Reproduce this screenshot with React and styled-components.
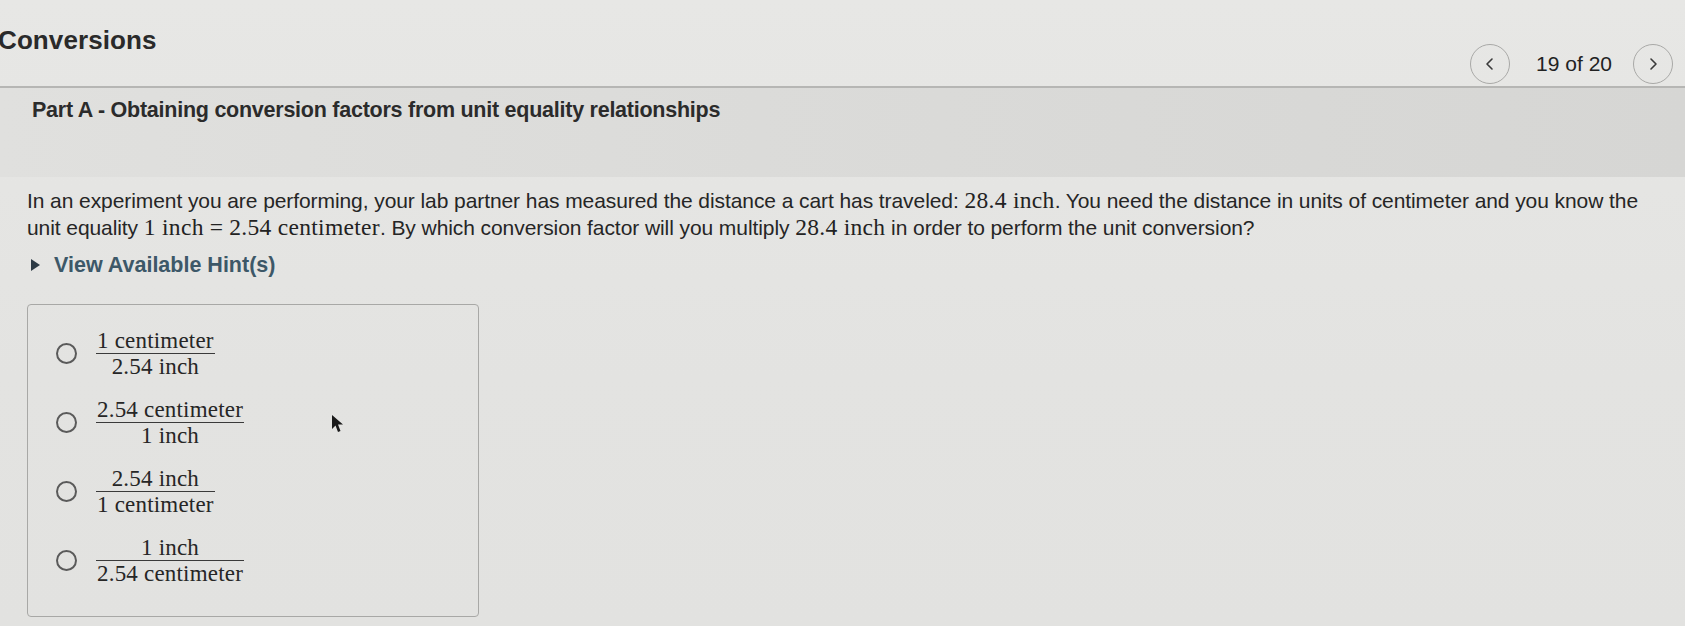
import styled, { createGlobalStyle } from 'styled-components'

const GlobalStyle = createGlobalStyle`
  html, body {
    margin: 0;
    padding: 0;
    background: #e4e4e2;
  }
  body {
    font-family: "Liberation Sans", Arial, sans-serif;
    color: #262626;
  }
`

const Page = styled.div`
  width: 1685px;
  height: 626px;
  overflow: hidden;
  background: linear-gradient(180deg, #e7e7e5 0%, #e3e3e1 60%, #e2e2e0 100%);
`

const TopBar = styled.header`
  display: flex;
  justify-content: space-between;
  align-items: flex-start;
  height: 86px;
  border-bottom: 2px solid #b6b6b4;
`

const Title = styled.h1`
  margin: 22px 0 0 -2px;
  font-size: 26px;
  line-height: 36px;
  font-weight: 700;
  color: #2a2a2a;
  letter-spacing: 0.1px;
`

const Pager = styled.nav`
  display: flex;
  align-items: center;
  margin: 44px 12px 0 0;
`

const PagerButton = styled.button`
  width: 40px;
  height: 40px;
  border-radius: 50%;
  border: 1.5px solid #a9a9a7;
  background: transparent;
  display: flex;
  align-items: center;
  justify-content: center;
  padding: 0;
  color: #3a3a3a;
`

const PagerLabel = styled.span`
  font-size: 21px;
  color: #222;
  margin: 0 21px 0 26px;
`

const PartBand = styled.div`
  height: 89px;
  background: linear-gradient(90deg, #e0e0de 0%, #dbdbd9 45%, #d6d6d4 100%);
  padding: 9px 0 0 32px;
  box-sizing: border-box;
`

const PartTitle = styled.h2`
  margin: 0;
  font-size: 21.5px;
  line-height: 26px;
  font-weight: 700;
  color: #2b2b2b;
  letter-spacing: -0.25px;
`

const Body = styled.section`
  padding: 10px 0 0 27px;
`

const Question = styled.p`
  margin: 0;
  font-size: 21px;
  line-height: 26px;
  color: #262626;
  white-space: nowrap;
  letter-spacing: -0.08px;
`

const Math = styled.span`
  font-family: "Liberation Serif", "DejaVu Serif", serif;
  font-size: 23.5px;
  letter-spacing: 0.3px;
  color: #222;
`

const Relation = styled.span`
  margin: 0 6px;
`

const HintToggle = styled.div`
  display: flex;
  align-items: center;
  gap: 14px;
  margin: 11px 0 0 4px;
  font-size: 21.5px;
  line-height: 26px;
  font-weight: 700;
  color: #3d5868;
`

const Triangle = styled.span`
  width: 0;
  height: 0;
  border-top: 6px solid transparent;
  border-bottom: 6px solid transparent;
  border-left: 9px solid #2c3a44;
`

const AnswerBox = styled.div`
  position: relative;
  width: 452px;
  height: 313px;
  margin-top: 26px;
  box-sizing: border-box;
  border: 1.5px solid #a8a8a6;
  border-radius: 4px;
  padding: 22px 0 0 28px;
  display: flex;
  flex-direction: column;
  gap: 17px;
`

const Option = styled.label`
  display: flex;
  align-items: center;
  gap: 19px;
  height: 52px;
`

const Radio = styled.span`
  width: 17px;
  height: 17px;
  border-radius: 50%;
  border: 2px solid #5a5a5a;
  flex-shrink: 0;
`

const Fraction = styled.span`
  display: inline-flex;
  flex-direction: column;
  align-items: center;
  font-family: "Liberation Serif", "DejaVu Serif", serif;
  font-size: 23px;
  line-height: 23px;
  color: #262626;
  letter-spacing: 0.2px;
`

const Numerator = styled.span`
  padding: 0 1px 1px;
  border-bottom: 1.8px solid #3a3a3a;
  align-self: stretch;
  text-align: center;
`

const Denominator = styled.span`
  padding: 1px 1px 0;
`

const Pointer = styled.svg`
  position: absolute;
  left: 303px;
  top: 109px;
`

const options = [
  ['1 centimeter', '2.54 inch'],
  ['2.54 centimeter', '1 inch'],
  ['2.54 inch', '1 centimeter'],
  ['1 inch', '2.54 centimeter'],
]

const Chevron = ({ dir }) => (
  <svg width="14" height="14" viewBox="0 0 14 14">
    <path
      d={dir === 'left' ? 'M9 2 L4 7 L9 12' : 'M5 2 L10 7 L5 12'}
      fill="none"
      stroke="currentColor"
      strokeWidth="1.6"
      strokeLinecap="round"
      strokeLinejoin="round"
    />
  </svg>
)

export default function App() {
  return (
    <Page>
      <GlobalStyle />
      <TopBar>
        <Title>Conversions</Title>
        <Pager>
          <PagerButton aria-label="previous">
            <Chevron dir="left" />
          </PagerButton>
          <PagerLabel>19 of 20</PagerLabel>
          <PagerButton aria-label="next">
            <Chevron dir="right" />
          </PagerButton>
        </Pager>
      </TopBar>

      <PartBand>
        <PartTitle>Part A - Obtaining conversion factors from unit equality relationships</PartTitle>
      </PartBand>

      <Body>
        <Question>
          In an experiment you are performing, your lab partner has measured the distance a cart has traveled:{' '}
          <Math>28.4 inch</Math>. You need the distance in units of centimeter and you know the
          <br />
          unit equality{' '}
          <Math>
            1 inch<Relation>=</Relation>2.54 centimeter
          </Math>
          . By which conversion factor will you multiply <Math>28.4 inch</Math> in order to perform the unit
          conversion?
        </Question>

        <HintToggle>
          <Triangle />
          View Available Hint(s)
        </HintToggle>

        <AnswerBox>
          {options.map(([num, den]) => (
            <Option key={num + den}>
              <Radio />
              <Fraction>
                <Numerator>{num}</Numerator>
                <Denominator>{den}</Denominator>
              </Fraction>
            </Option>
          ))}
          <Pointer width="14" height="20" viewBox="0 0 14 20">
            <path d="M1 1 L1 15 L4.5 11.5 L7 18 L9.5 17 L7 10.5 L12 10.5 Z" fill="#1a1a1a" />
          </Pointer>
        </AnswerBox>
      </Body>
    </Page>
  )
}
